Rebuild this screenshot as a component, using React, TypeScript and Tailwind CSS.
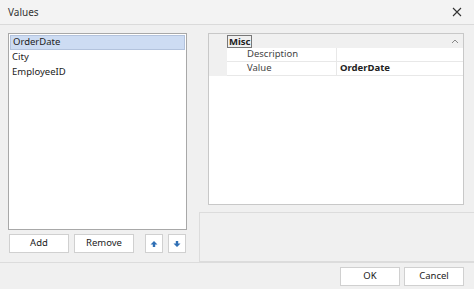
import React from "react";

function ArrowIcon({ down = false }: { down?: boolean }) {
  return (
    <svg width="8" height="8" viewBox="0 0 8 8" className={down ? "rotate-180" : ""}>
      <path d="M4 1 L7.5 4.5 H5.2 V7 H2.8 V4.5 H0.5 Z" fill="#2f6fb5" />
    </svg>
  );
}

function Btn({ children, className = "" }: { children: React.ReactNode; className?: string }) {
  return (
    <div
      className={
        "flex items-center justify-center border border-[#d0d0d0] bg-white text-[9.5px] text-[#222] " +
        className
      }
    >
      {children}
    </div>
  );
}

export default function App() {
  const items = ["OrderDate", "City", "EmployeeID"];
  return (
    <div
      className="flex h-[289px] w-[474px] flex-col overflow-hidden bg-[#f0f0f0] text-[#222]"
      style={{ fontFamily: '"Noto Sans", "Open Sans", sans-serif' }}
    >
      {/* title bar */}
      <div className="flex h-[25px] items-center justify-between border-b border-[#dadada] bg-[#f3f3f3] pl-[8px] pr-[12px]">
        <span className="text-[10px] text-[#333]">Values</span>
        <svg width="10" height="10" viewBox="0 0 10 10">
          <path d="M1 1 L9 9 M9 1 L1 9" stroke="#333" strokeWidth="1.1" />
        </svg>
      </div>

      {/* body */}
      <div className="flex h-[238px] border-b border-[#dcdcdc]">
        <div className="flex w-[199px] flex-col pl-[8px] pt-[8px]">
          <div className="h-[197px] w-[179px] border border-[#a8a8a8] bg-white pt-px">
            {items.map((it, i) => (
              <div
                key={it}
                className={
                  "flex h-[15px] items-center pl-[2px] text-[9.5px] " +
                  (i === 0 ? "mx-px border border-[#b3c3dd] bg-[#cddcf3]" : "pl-[3px]")
                }
              >
                {it}
              </div>
            ))}
          </div>
          <div className="mt-[4px] flex h-[19px] items-stretch">
            <Btn className="ml-px w-[60px]">Add</Btn>
            <Btn className="ml-[5px] w-[60px]">Remove</Btn>
            <Btn className="ml-[11px] w-[18px]">
              <ArrowIcon />
            </Btn>
            <Btn className="ml-[5px] w-[18px]">
              <ArrowIcon down />
            </Btn>
          </div>
        </div>

        <div className="flex flex-1 flex-col pt-[8px]">
          <div className="ml-[9px] h-[174px] w-[256px] border border-[#c8c8c8] bg-white">
            <div className="flex h-[14px] bg-[#f0f0f0]">
              <div className="w-[18px]" />
              <div className="flex flex-1 items-center justify-between pr-[4px]">
                <span className="border border-[#777] px-px text-[9.5px] font-bold leading-[11px]">Misc</span>
                <svg width="8" height="6" viewBox="0 0 8 6">
                  <path d="M1 5 L4 2 L7 5" stroke="#888" strokeWidth="1" fill="none" />
                </svg>
              </div>
            </div>
            {[
              ["Description", ""],
              ["Value", "OrderDate"],
            ].map(([k, v]) => (
              <div key={k} className="flex h-[14px]">
                <div className="w-[18px] bg-[#f0f0f0]" />
                <div className="flex w-[110px] items-center border-b border-r border-[#e8e8e8] pl-[20px] text-[9.5px] text-[#444]">
                  {k}
                </div>
                <div className="flex flex-1 items-center border-b border-[#e8e8e8] pl-[3px] text-[9.5px] font-bold text-[#222]">
                  {v}
                </div>
              </div>
            ))}
          </div>
          <div className="mt-[7px] h-[50px] w-full border border-[#dcdcdc] border-r-0 bg-[#f0f0f0]" />
        </div>
      </div>

      {/* footer */}
      <div className="flex flex-1 items-center justify-end pr-[10px]">
        <Btn className="h-[19px] w-[60px] border-[#3c6fb5]">OK</Btn>
        <Btn className="ml-[4px] h-[19px] w-[60px]">Cancel</Btn>
      </div>
    </div>
  );
}
